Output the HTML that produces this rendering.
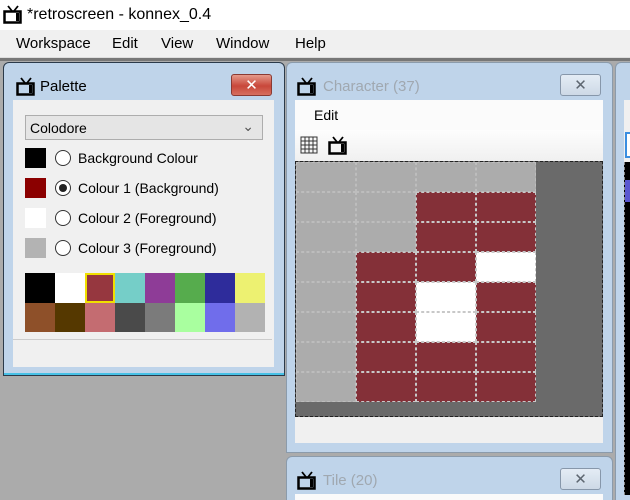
<!DOCTYPE html>
<html><head><style>
*{box-sizing:border-box;margin:0;padding:0}
html,body{width:630px;height:500px;overflow:hidden}
body{position:relative;background:#ababab;font-family:"Liberation Sans",sans-serif;color:#000}
.a{position:absolute}
.win{position:absolute;background:#bfd4ea;border:1px solid #8b9bab;border-radius:6px 6px 0 0}
.cl{position:absolute;background:#f0f0f0}
.xb{position:absolute;width:41px;height:22px;border:1px solid #8797aa;border-radius:3px;background:linear-gradient(#e4ecf5,#cdd9e6);text-align:center;font:bold 15px/20px "DejaVu Sans",sans-serif;color:#5d6670}
.sw{position:absolute;left:25px;width:21px;height:20px}
.rd{position:absolute;left:55px;width:16px;height:16px;border:1px solid #333;border-radius:50%;background:#fff}
.lb{position:absolute;left:78px;font-size:14px}
</style></head><body>
<div class="a" style="left:0;top:0;width:630px;height:30px;background:#fff"></div>
<svg class="a" style="left:3px;top:5px" width="20" height="20" viewBox="0 0 20 20"><path d="M5 1l4 5M15 1l-4 5" stroke="#000" stroke-width="1.8" fill="none"/><rect x="1.5" y="6.5" width="16" height="11" fill="none" stroke="#000" stroke-width="2.5"/><rect x="13" y="8" width="3" height="8" fill="#000"/></svg>
<div class="a" style="left:27px;top:6px;font-size:16px">*retroscreen - konnex_0.4</div>
<div class="a" style="left:0;top:30px;width:630px;height:28px;background:#f0f0f0;border-bottom:1px solid #ddd"></div>
<div class="a" style="left:16px;top:35px;font-size:15px">Workspace</div>
<div class="a" style="left:112px;top:35px;font-size:15px">Edit</div>
<div class="a" style="left:161px;top:35px;font-size:15px">View</div>
<div class="a" style="left:216px;top:35px;font-size:15px">Window</div>
<div class="a" style="left:295px;top:35px;font-size:15px">Help</div>
<div class="a" style="left:0;top:58px;width:630px;height:3px;background:#777"></div>

<div class="win" style="left:3px;top:62px;width:282px;height:314px;border-color:#2b3a4a;box-shadow:inset 0 -2px 0 #47c1e6"></div>
<svg class="a" style="left:16px;top:77px" width="20" height="20" viewBox="0 0 20 20"><path d="M5 1l4 5M15 1l-4 5" stroke="#000" stroke-width="1.8" fill="none"/><rect x="1.5" y="6.5" width="16" height="11" fill="none" stroke="#000" stroke-width="2.5"/><rect x="13" y="8" width="3" height="8" fill="#000"/></svg>
<div class="a" style="left:40px;top:78px;font-size:15px">Palette</div>
<div class="xb" style="left:231px;top:74px;background:linear-gradient(#e59a8b,#c8473a 55%,#d66f5f);border-color:#8a3a33;color:#fff">✕</div>
<div class="cl" style="left:13px;top:100px;width:261px;height:267px"></div>
<div class="a" style="left:25px;top:115px;width:238px;height:25px;background:#e5e5e5;border:1px solid #adadad;font-size:14px;padding:4px 0 0 4px">Colodore<span style="position:absolute;right:8px;top:2px;color:#555">⌄</span></div>
<div class="sw" style="top:148px;background:#000"></div>
<div class="rd" style="top:150px"></div><div class="lb" style="top:150px">Background Colour</div>
<div class="sw" style="top:178px;background:#8b0000"></div>
<div class="rd" style="top:180px"></div><div class="a" style="left:59px;top:184px;width:8px;height:8px;border-radius:50%;background:#222"></div><div class="lb" style="top:180px">Colour 1 (Background)</div>
<div class="sw" style="top:208px;background:#fff"></div>
<div class="rd" style="top:210px"></div><div class="lb" style="top:210px">Colour 2 (Foreground)</div>
<div class="sw" style="top:238px;background:#b3b3b3"></div>
<div class="rd" style="top:240px"></div><div class="lb" style="top:240px">Colour 3 (Foreground)</div>
<div class="a" style="left:25px;top:273px;width:240px;height:59px;display:grid;grid-template-columns:repeat(8,30px);grid-template-rows:30px 29px">
<div style="background:#000"></div><div style="background:#fff"></div><div style="background:#96373f;border:2px solid #f0e000"></div><div style="background:#75cec8"></div><div style="background:#8e3c97"></div><div style="background:#56ac4d"></div><div style="background:#2e2c9b"></div><div style="background:#edf171"></div>
<div style="background:#8e5029"></div><div style="background:#553800"></div><div style="background:#c46c71"></div><div style="background:#4a4a4a"></div><div style="background:#7b7b7b"></div><div style="background:#a9ff9f"></div><div style="background:#706deb"></div><div style="background:#b2b2b2"></div>
</div>
<div class="a" style="left:13px;top:339px;width:259px;height:1px;background:#ccc"></div>

<div class="win" style="left:286px;top:62px;width:327px;height:391px"></div>
<svg class="a" style="left:297px;top:77px" width="20" height="20" viewBox="0 0 20 20"><path d="M5 1l4 5M15 1l-4 5" stroke="#000" stroke-width="1.8" fill="none"/><rect x="1.5" y="6.5" width="16" height="11" fill="none" stroke="#000" stroke-width="2.5"/><rect x="13" y="8" width="3" height="8" fill="#000"/></svg>
<div class="a" style="left:323px;top:78px;font-size:15px;color:#a0a8b0">Character (37)</div>
<div class="xb" style="left:560px;top:74px">✕</div>
<div class="cl" style="left:295px;top:100px;width:308px;height:343px"></div>
<div class="a" style="left:295px;top:100px;width:308px;height:30px;background:#fbfbfb"></div>
<div class="a" style="left:314px;top:107px;font-size:14px">Edit</div>
<div class="a" style="left:295px;top:130px;width:308px;height:31px;background:linear-gradient(#fdfdfd,#f0f0f0)"></div>
<svg class="a" style="left:300px;top:136px" width="18" height="18" viewBox="0 0 18 18"><path d="M1 1h16v16H1zM5 1v16M9 1v16M13 1v16M1 5h16M1 9h16M1 13h16" stroke="#333" stroke-width="1" fill="none"/></svg>
<svg class="a" style="left:328px;top:136px" width="20" height="20" viewBox="0 0 20 20"><path d="M5 1l4 5M15 1l-4 5" stroke="#000" stroke-width="1.8" fill="none"/><rect x="1.5" y="6.5" width="16" height="11" fill="none" stroke="#000" stroke-width="2.5"/><rect x="13" y="8" width="3" height="8" fill="#000"/></svg>
<div class="a" style="left:295px;top:161px;width:308px;height:256px;background:#6a6a6a;border:1px dashed #222"></div>
<div class="a" style="left:296px;top:162px;width:240px;height:240px;display:grid;grid-template-columns:repeat(4,60px);grid-template-rows:repeat(8,30px)" id="g"></div>
<script>
var m=["gggg","ggrr","ggrr","grrw","grwr","grwr","grrr","grrr"],c={g:"#acacac",r:"#843038",w:"#fff"},h="";
m.forEach(function(r){for(var i=0;i<4;i++){var k=r[i];h+='<div style="background:'+c[k]+';border:1px dashed '+(k=="g"?"#bdbdbd":"#c8c8c8")+'"></div>'}});
document.getElementById("g").innerHTML=h;
</script>

<div class="win" style="left:286px;top:456px;width:327px;height:50px"></div>
<svg class="a" style="left:297px;top:471px" width="20" height="20" viewBox="0 0 20 20"><path d="M5 1l4 5M15 1l-4 5" stroke="#000" stroke-width="1.8" fill="none"/><rect x="1.5" y="6.5" width="16" height="11" fill="none" stroke="#000" stroke-width="2.5"/><rect x="13" y="8" width="3" height="8" fill="#000"/></svg>
<div class="a" style="left:323px;top:472px;font-size:15px;color:#a0a8b0">Tile (20)</div>
<div class="xb" style="left:560px;top:468px">✕</div>
<div class="cl" style="left:295px;top:494px;width:308px;height:6px;background:#fafafa"></div>

<div class="win" style="left:615px;top:62px;width:30px;height:440px"></div>
<div class="a" style="left:624px;top:100px;width:6px;height:395px;background:#f0f0f0"></div>
<div class="a" style="left:625px;top:132px;width:5px;height:26px;border:2px solid #3a8ee0;border-right:none;background:#fff"></div>
<div class="a" style="left:624px;top:162px;width:6px;height:333px;background:#000;border-left:1px dashed #888"></div>
<div class="a" style="left:625px;top:180px;width:5px;height:22px;background:#5a58d0"></div>
</body></html>
